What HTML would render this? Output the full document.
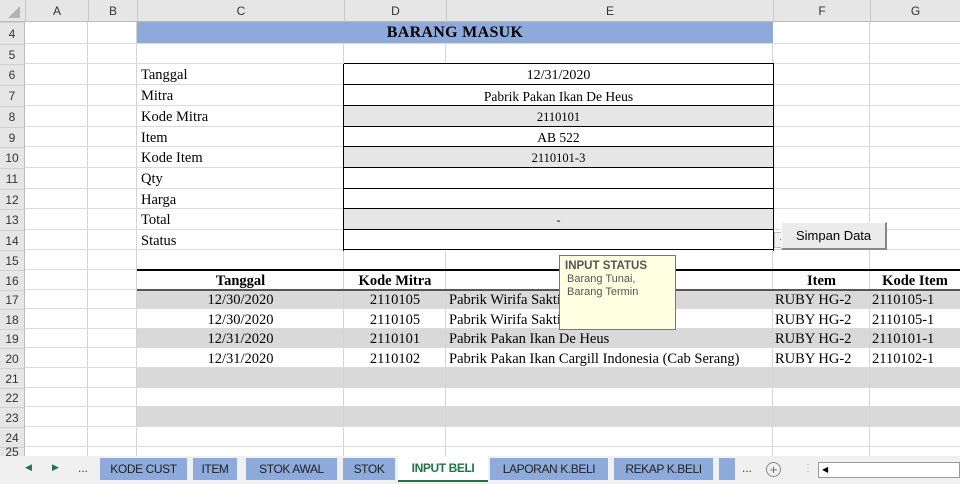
<!DOCTYPE html>
<html><head><meta charset="utf-8"><style>
body{margin:0;width:960px;height:484px;overflow:hidden;background:#fff;position:relative;font-family:"Liberation Serif",serif;}
div{box-sizing:border-box;}
.a{position:absolute;}
.hdr{background:#e6e6e6;color:#333;font-family:"Liberation Sans",sans-serif;font-size:12px;display:flex;align-items:center;justify-content:center;}
.t{position:absolute;font-size:14.5px;color:#000;white-space:nowrap;display:flex;align-items:center;}
.tab{position:absolute;top:458px;height:22px;background:#8eaadb;font-family:"Liberation Sans",sans-serif;font-size:12px;letter-spacing:-0.4px;color:#222;display:flex;align-items:center;justify-content:center;}
</style></head><body>
<div id="g"></div>
<script>
var cols=[0,25,88,137,344,446,773,870,960];
var names=["","A","B","C","D","E","F","G"];
var rows={4:22,5:44,6:64,7:85,8:106,9:127,10:147,11:168,12:189,13:209,14:230,15:250,16:270,17:290,18:309,19:329,20:348,21:368,22:388,23:407,24:427,25:447};
var h='';
function box(x,y,w,hh,st){h+='<div class="a" style="left:'+x+'px;top:'+y+'px;width:'+w+'px;height:'+hh+'px;'+st+'"></div>';}
function txt(x,y,w,hh,s,st){h+='<div class="t" style="left:'+x+'px;top:'+y+'px;width:'+w+'px;height:'+hh+'px;'+(st||'')+'">'+s+'</div>';}
[17,19,21,23].forEach(function(r){box(137,rows[r],823,rows[r+1]-rows[r],'background:#d9d9d9');});
for(var i=1;i<cols.length-1;i++){box(cols[i]-1,0,1,456,'background:#d4d4d4');}
for(var r=4;r<=25;r++){box(0,rows[r]-1,960,1,'background:#dadada');}
box(137,22,636,21,'background:#8eaadb');
txt(137,22,636,21,'<b style="font-size:16px;letter-spacing:.3px">BARANG MASUK</b>','justify-content:center');
box(344,64,429,187,'background:#fff');
[8,10,13].forEach(function(r){box(344,rows[r],429,rows[r+1]-rows[r],'background:#e7e6e6');});
for(var r=6;r<=15;r++){box(344,rows[r]-1,430,1,'background:#000');}
box(343,64,1,187,'background:#000');box(773,64,1,187,'background:#000');
var lab={6:"Tanggal",7:"Mitra",8:"Kode Mitra",9:"Item",10:"Kode Item",11:"Qty",12:"Harga",13:"Total",14:"Status"};
for(var k in lab){txt(141,rows[k]+1,200,rows[+k+1]-rows[k],lab[k]);}
var val={6:["12/31/2020",14],7:["Pabrik Pakan Ikan De Heus",13.5],8:["2110101",12.5],9:["AB 522",13.5],10:["2110101-3",12.5],13:["-",12]};
for(var k in val){txt(344,rows[k]+1,429,rows[+k+1]-rows[k],val[k][0],'justify-content:center;font-size:'+val[k][1]+'px');}
box(137,269,823,2,'background:#000');box(137,289,823,2,'background:#555');
box(137,271,823,18,'background:#fff');
for(var i=4;i<=7;i++)box(cols[i]-1,271,1,18,'background:#d4d4d4');
txt(137,272,207,19,'<b>Tanggal</b>','justify-content:center');
txt(344,272,102,19,'<b>Kode Mitra</b>','justify-content:center');
txt(773,272,97,19,'<b>Item</b>','justify-content:center');
txt(870,272,90,19,'<b>Kode Item</b>','justify-content:center');
var data=[["12/30/2020","2110105","Pabrik Wirifa Sakti","2110105-1"],["12/30/2020","2110105","Pabrik Wirifa Sakti","2110105-1"],["12/31/2020","2110101","Pabrik Pakan Ikan De Heus","2110101-1"],["12/31/2020","2110102","Pabrik Pakan Ikan Cargill Indonesia (Cab Serang)","2110102-1"]];
data.forEach(function(d,i){var r=17+i,y=rows[r]+1,hh=rows[r+1]-rows[r];
txt(137,y,207,hh,d[0],'justify-content:center');txt(344,y,102,hh,d[1],'justify-content:center');
txt(449,y,320,hh,d[2]);txt(775,y,95,hh,'RUBY HG-2');txt(872,y,88,hh,d[3]);});
box(0,0,960,22,'background:#e6e6e6');box(0,21,960,1,'background:#bbb');
for(var i=1;i<cols.length-1;i++){h+='<div class="a hdr" style="left:'+cols[i]+'px;top:0;width:'+(cols[i+1]-cols[i])+'px;height:21px;border-left:1px solid #c8c8c8">'+names[i]+'</div>';}
h+='<div class="a" style="left:8px;top:6px;width:0;height:0;border-left:12px solid transparent;border-bottom:12px solid #b4b4b4"></div>';
box(0,22,25,434,'background:#e6e6e6');box(24,22,1,434,'background:#bbb');
for(var r=4;r<=25;r++){h+='<div class="a hdr" style="left:0;top:'+rows[r]+'px;width:24px;height:'+((rows[r+1]||456)-rows[r])+'px;border-top:1px solid #d0d0d0;font-size:12px">'+r+'</div>';}
h+='<div class="a" style="left:559px;top:255px;width:117px;height:75px;background:#ffffe1;border:1px solid #777;font-family:\'Liberation Sans\',sans-serif;padding:4px 5px;line-height:13px"><div style="font-size:11.5px;font-weight:bold;color:#555">INPUT STATUS</div><div style="font-size:11px;color:#555;padding-left:2px">Barang Tunai,<br>Barang Termin</div></div>';
h+='<div class="a" style="left:774px;top:232px;width:16px;height:16px;background:#f2f2f2;border:1px solid #bbb;font-size:8px;color:#444;text-align:center;line-height:16px;font-family:\'Liberation Sans\',sans-serif">▾</div>';
h+='<div class="a" style="left:781px;top:222px;width:106px;height:28px;background:#ebebeb;border:1px solid #fff;border-right:2px solid #888;border-bottom:2px solid #888;font-family:\'Liberation Sans\',sans-serif;font-size:13px;color:#000;padding:5px 0 0 14px">Simpan Data</div>';
box(0,456,960,28,'background:#f0f0f0');
h+='<div class="a" style="left:25px;top:462px;font-size:9px;color:#217346;font-family:\'Liberation Sans\'">◀</div><div class="a" style="left:52px;top:462px;font-size:9px;color:#217346;font-family:\'Liberation Sans\'">▶</div><div class="a" style="left:78px;top:461px;font-size:12px;color:#333;font-family:\'Liberation Sans\'">...</div>';
var tabs=[["KODE CUST",100,187],["ITEM",193,237],["STOK AWAL",246,337],["STOK",343,395],["LAPORAN K.BELI",490,608],["REKAP K.BELI",614,713],["",719,735]];
tabs.forEach(function(t){h+='<div class="tab" style="left:'+t[1]+'px;width:'+(t[2]-t[1])+'px">'+t[0]+'</div>';});
h+='<div class="tab" style="left:398px;width:90px;top:456px;height:26px;background:#fff;color:#217346;font-weight:bold;border-bottom:2px solid #217346">INPUT BELI</div>';
h+='<div class="a" style="left:742px;top:461px;font-size:12px;color:#333;font-family:\'Liberation Sans\'">...</div>';
h+='<div class="a" style="left:766px;top:462px;width:15px;height:15px;border:1px solid #888;border-radius:50%;font-size:13px;line-height:13px;text-align:center;color:#666;font-family:\'Liberation Sans\'">+</div>';
h+='<div class="a" style="left:803px;top:463px;font-size:10px;color:#aaa">⋮</div>';
h+='<div class="a" style="left:818px;top:462px;width:142px;height:16px;background:#fff;border:1px solid #999;font-size:8px;line-height:14px;padding-left:3px">◀</div>';
document.getElementById('g').innerHTML=h;
</script>
</body></html>
